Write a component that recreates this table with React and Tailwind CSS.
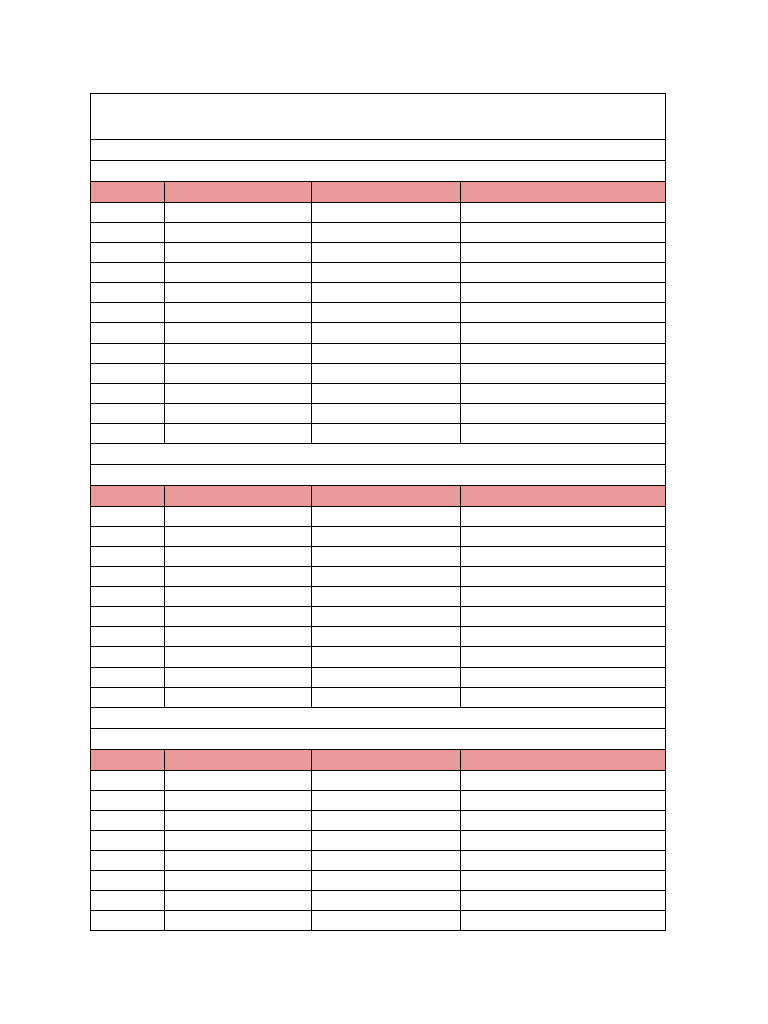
import React from 'react';

// Sheet-like table: title band, spacer rows, then three blocks of columns
const sections = [12, 10, 8];

function SpacerRow() {
  return <div className="h-[21px] border-t border-black" />;
}

function GridRow({ header }) {
  const cell = 'border-l border-black';
  return (
    <div
      className={
        'grid grid-cols-[73px_147px_149px_1fr] border-t border-black ' +
        (header ? 'h-[21px] bg-[#ea9999]' : 'h-[20.08px] bg-white')
      }
    >
      <div />
      <div className={cell} />
      <div className={cell} />
      <div className={cell} />
    </div>
  );
}

export default function App() {
  return (
    <div className="min-h-[1024px] w-[768px] bg-white font-['Liberation_Sans',Arial,sans-serif]">
      <div className="pt-[93px] pl-[90px]">
        <div className="w-[576px] border border-black box-border">
          <div className="h-[45px]" />
          {sections.map((rows, i) => (
            <div key={i}>
              <SpacerRow />
              <SpacerRow />
              <GridRow header />
              {Array.from({ length: rows }).map((_, r) => (
                <GridRow key={r} />
              ))}
            </div>
          ))}
        </div>
      </div>
    </div>
  );
}
